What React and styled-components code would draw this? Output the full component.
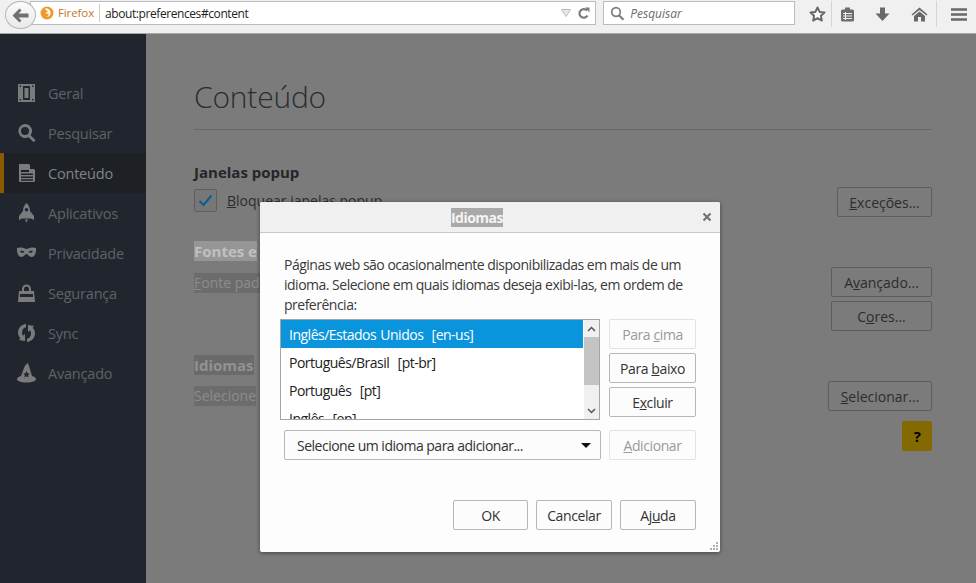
import styled, { createGlobalStyle } from 'styled-components';

const Global = createGlobalStyle`
  html, body { margin: 0; height: 100%; overflow: hidden; }
  body { font-family: "Open Sans", "Noto Sans", sans-serif; font-size: 14px; letter-spacing: -0.5px; }
  * { box-sizing: border-box; }
`;

const Window = styled.div`
  width: 976px;
  height: 583px;
  display: flex;
  flex-direction: column;
  position: relative;
  overflow: hidden;
`;

/* toolbar */
const Toolbar = styled.div`
  height: 34px;
  flex: none;
  display: flex;
  align-items: flex-start;
  background: #f0f0f0;
  border-bottom: 1px solid #a8a8a8;
  padding: 1px 0 0 5px;
  position: relative;
`;
const BackButton = styled.div`
  width: 31px;
  height: 28px;
  border-radius: 50%;
  background: linear-gradient(#fbfbfb, #e9e9e9);
  border: 1px solid #b5b5b5;
  display: flex;
  align-items: center;
  justify-content: center;
  z-index: 1;
`;
const UrlBar = styled.div`
  width: 567px;
  height: 24px;
  margin-left: -6px;
  background: #fff;
  border: 1px solid #b9bcc0;
  display: flex;
  align-items: center;
  padding-left: 9px;
`;
const Identity = styled.span`
  color: #c8742a;
  font-size: 11.5px;
  margin-left: 4px;
  padding-right: 5px;
  border-right: 1px solid #d9c9b5;
  line-height: 18px;
  letter-spacing: -0.1px;
`;
const UrlText = styled.span`
  color: #222;
  font-size: 12px;
  margin-left: 5px;
  flex: 1;
  letter-spacing: -0.42px;
`;
const UrlIcons = styled.div`
  display: flex;
  align-items: center;
  gap: 7px;
  padding-right: 5px;
`;
const SearchBar = styled.div`
  width: 192px;
  height: 24px;
  margin-left: 7px;
  background: #fff;
  border: 1px solid #b9bcc0;
  display: flex;
  align-items: center;
  gap: 5px;
  padding-left: 6px;
  font-style: italic;
  font-size: 12px;
  color: #6a6a6a;
  letter-spacing: 0;
`;
const ToolIcons = styled.div`
  display: flex;
  align-items: center;
  height: 26px;
  margin-left: 8px;
`;
const ToolSlot = styled.div`
  width: ${p => p.$w}px;
  display: flex;
  justify-content: center;
  align-items: center;
  height: 26px;
  padding-left: ${p => p.$pad || 0}px;
  border-right: ${p => (p.$sep ? '1px solid #d6d6d6' : 'none')};
`;

/* page */
const Page = styled.div`
  flex: 1;
  display: flex;
  min-height: 0;
`;
const Sidebar = styled.nav`
  width: 146px;
  flex: none;
  background: #21262e;
  padding-top: 39px;
`;
const NavItem = styled.div`
  height: 40px;
  display: flex;
  align-items: center;
  gap: 12px;
  padding-left: ${p => (p.$active ? 13 : 17)}px;
  font-size: 14.5px;
  letter-spacing: -0.2px;
  color: ${p => (p.$active ? '#808489' : '#5e6266')};
  background: ${p => (p.$active ? '#1d2126' : 'transparent')};
  border-left: ${p => (p.$active ? '4px solid #8a5a00' : 'none')};
`;
const NavIcon = styled.svg`
  width: 19px;
  height: 20px;
  flex: none;
  fill: #797b7d;
`;
const Content = styled.main`
  flex: 1;
  background: #7b7b7b;
  padding: 42px 44px 0 48px;
  color: #26282b;
`;
const Heading = styled.h1`
  margin: 0;
  font-weight: 300;
  font-size: 30px;
  line-height: 42px;
  letter-spacing: -0.2px;
  color: #2b2d30;
  padding-bottom: 11px;
  border-bottom: 1px solid #676767;
`;
const SectionTitle = styled.h2`
  margin: ${p => p.$top}px 0 0;
  font-size: 15px;
  font-weight: 700;
  line-height: 18px;
  letter-spacing: 0;
  height: 20px;
  color: #24262a;
`;
const Row = styled.div`
  display: flex;
  align-items: flex-start;
  justify-content: space-between;
  margin-top: ${p => p.$top}px;
`;
const RowLabel = styled.div`
  display: flex;
  align-items: center;
  gap: 10px;
  line-height: 20px;
  letter-spacing: 0;
  color: #2b2d30;
  padding-top: ${p => p.$top || 0}px;
`;
const Check = styled.span`
  width: 23px;
  height: 23px;
  border: 1px solid #5f5f5f;
  border-radius: 2px;
  background: #777;
  display: flex;
  align-items: center;
  justify-content: center;
`;
const Sel = styled.span`
  background: ${p => p.$bg};
  color: ${p => p.$fg};
`;
const ButtonStack = styled.div`
  display: flex;
  flex-direction: column;
  gap: 4px;
`;
const GhostButton = styled.div`
  height: 30px;
  width: ${p => p.$w}px;
  border: 1px solid #5d5d5d;
  border-radius: 2px;
  background: #7b7b7b;
  display: flex;
  align-items: center;
  justify-content: center;
  color: #2b2d30;
  letter-spacing: 0;
`;
const HelpButton = styled.div`
  width: 30px;
  height: 30px;
  margin: 10px 0 0 auto;
  background: #846800;
  border-radius: 2px;
  display: flex;
  align-items: center;
  justify-content: center;
  font-weight: 700;
  font-size: 15px;
  color: #000;
`;

/* dialog */
const Dialog = styled.section`
  position: absolute;
  left: 260px;
  top: 202px;
  width: 460px;
  height: 350px;
  background: #fdfdfd;
  border-radius: 2px;
  box-shadow: 0 1px 4px rgba(0, 0, 0, 0.45);
  display: flex;
  flex-direction: column;
`;
const TitleBar = styled.header`
  height: 31px;
  flex: none;
  background: #f0f0f0;
  border-bottom: 1px solid #c9c9c9;
  border-radius: 2px 2px 0 0;
  display: flex;
  align-items: center;
  justify-content: center;
  padding-right: 26px;
  position: relative;
  font-weight: 700;
  font-size: 14px;
`;
const CloseX = styled.span`
  position: absolute;
  right: 5px;
  top: 7px;
  display: flex;
`;
const DialogBody = styled.div`
  flex: 1;
  padding: 22px 24px 0 20px;
  display: flex;
  flex-direction: column;
  color: #3a3a3a;
`;
const Intro = styled.p`
  margin: 0 0 4px 4px;
  line-height: 20px;
  font-size: 14px;
`;
const ListRow = styled.div`
  display: flex;
  justify-content: space-between;
  align-items: flex-start;
`;
const ListBox = styled.div`
  width: 320px;
  height: 101px;
  border: 1px solid #a5a5a5;
  background: #fff;
  display: flex;
  overflow: hidden;
`;
const Options = styled.div`
  flex: 1;
  overflow: hidden;
`;
const Option = styled.div`
  height: 28px;
  line-height: 30px;
  padding-left: 8px;
  white-space: pre;
  word-spacing: 1px;
  background: ${p => (p.$on ? '#0a94dc' : 'transparent')};
  color: ${p => (p.$on ? '#fff' : '#222')};
`;
const Scroll = styled.div`
  width: 16px;
  flex: none;
  background: #f0f0f0;
  border-left: 1px solid #fff;
  display: flex;
  flex-direction: column;
  align-items: center;
`;
const ScrollArrow = styled.div`
  height: 17px;
  display: flex;
  align-items: center;
  justify-content: center;
`;
const ScrollThumb = styled.div`
  width: 15px;
  height: 48px;
  background: #c4c4c4;
`;
const ScrollTrack = styled.div`
  flex: 1;
`;
const SideButtons = styled.div`
  display: flex;
  flex-direction: column;
  gap: 4px;
`;
const DlgButton = styled.div`
  width: ${p => p.$w}px;
  height: 30px;
  border: 1px solid ${p => (p.$off ? '#e2e2e2' : '#b7b7b7')};
  border-radius: 2px;
  background: #fcfcfc;
  color: ${p => (p.$off ? '#9a9a9a' : '#333')};
  display: flex;
  align-items: center;
  justify-content: center;
  letter-spacing: -0.4px;
`;
const AddRow = styled.div`
  display: flex;
  justify-content: space-between;
  margin: 10px 0 0 4px;
`;
const Select = styled.div`
  width: 317px;
  height: 30px;
  border: 1px solid #b7b7b7;
  border-radius: 2px;
  background: #fcfcfc;
  display: flex;
  align-items: center;
  justify-content: space-between;
  padding: 0 9px 0 12px;
  color: #333;
`;
const Caret = styled.span`
  width: 0;
  height: 0;
  border-left: 5px solid transparent;
  border-right: 5px solid transparent;
  border-top: 5px solid #111;
`;
const Footer = styled.div`
  display: flex;
  justify-content: flex-end;
  gap: 8px;
  margin-top: 40px;
`;
const Grip = styled.svg`
  position: absolute;
  right: 1px;
  bottom: 1px;
  width: 10px;
  height: 10px;
  fill: #aab0b5;
`;

const navItems = [
  { label: 'Geral', icon: <path fillRule="evenodd" d="M1 1h17v18H1zM2.600 2.600v1.500h1.500V2.600zM15 2.600v1.500h1.500V2.600zM2.600 16v1.500h1.500V16zM15 16v1.500h1.500V16zM6 3v14h7V3zM7.500 5h4v10h-4z" /> },
  { label: 'Pesquisar', icon: <path d="M8 1a7 7 0 0 1 5.600 11.200l5 5-2 2-5-5A7 7 0 1 1 8 1zm0 3a4 4 0 1 0 0 8 4 4 0 0 0 0-8z" /> },
  { label: 'Conteúdo', active: true, icon: <path fillRule="evenodd" d="M2 1h10l6 6v11a1 1 0 0 1-1 1H3a1 1 0 0 1-1-1zM13 2v4h4zM4 7v2h8V7zM4 10.500v1.500h12v-1.500zM4 13.500V15h12v-1.500zM4 16.300v1.400h12v-1.400z" /> },
  { label: 'Aplicativos', icon: <path d="M9.500 0c2.500 2 3.500 5 3.500 8l4 5v4l-3-1.500H5L2 17v-4l4-5c0-3 1-6 3.500-8zM9.500 5a1.800 1.800 0 1 0 0 3.600 1.800 1.800 0 0 0 0-3.600zM8 16.500h3L9.500 19.500z" /> },
  { label: 'Privacidade', icon: <path fillRule="evenodd" d="M0 5c3-1 6-.5 9.500 1C13 4.500 16 4 19 5c.5 4-1 9-4.500 9-2.500 0-3.500-3-5-3s-2.500 3-5 3C1 14-.5 9 0 5zM3 8c1 2 3 2.500 4.500 1C6 7.500 4.500 7.500 3 8zm13 0c-1.500-.5-3-.5-4.500 1 1.500 1.500 3.500 1 4.500-1z" /> },
  { label: 'Segurança', icon: <path fillRule="evenodd" d="M5 8V6a4.500 4.500 0 0 1 9 0v2h3l1 11H1L2 8zM7 8h5V6a2.500 2.500 0 0 0-5 0zM3 11v3h13v-3z" /> },
  { label: 'Sync', icon: <path d="M9 1v3.200C6.500 4.600 5 6.800 5 9.500c0 1.200.3 2.300.9 3.200L8 11v7l-6-1 1.300-1.800C1.800 13.600 1 11.700 1 9.500 1 5.200 4.500 1.500 9 1zm1 18v-3.200c2.500-.4 4-2.600 4-5.300 0-1.200-.3-2.300-.9-3.200L11 9V2l6 1-1.300 1.800c1.500 1.600 2.300 3.500 2.300 5.700 0 4.300-3.500 8-8 8.500z" /> },
  { label: 'Avançado', icon: <path fillRule="evenodd" d="M11 0l1 3 3 10c2 .5 4 1.500 4 3 0 2-4 3.500-9.500 3.500S0 18 0 16c0-1.500 2-2.500 4-3l3-8c1-2.500 2.500-4.500 4-5zM9.500 8l-1 2.200-2.300.3 1.700 1.600-.5 2.400 2.100-1.200 2.100 1.200-.5-2.400 1.700-1.600-2.300-.3z" /> },
];

const App = () => (
  <Window>
    <Global />
    <Toolbar>
      <BackButton>
        <svg width="17" height="15" viewBox="0 0 17 15"><path d="M7.500 0.500L9.500 2.500 6.500 5.500H16.500V9.500H6.500L9.500 12.500 7.500 14.500 0.500 7.500z" fill="#6d6f73" /></svg>
      </BackButton>
      <UrlBar>
        <svg width="14" height="14" viewBox="0 0 14 14">
          <circle cx="7" cy="7" r="6.500" fill="#ef9a2d" />
          <path d="M5 2.500a4.500 4.500 0 0 1 5.500 4.500c0 2.500-2 4-4 4 2-1 2.500-2.500 2-3.500-1 .5-2.500.5-3-1 1 .3 2 0 2.500-1-1-.5-2-1.500-3-3z" fill="#fff" />
        </svg>
        <Identity>Firefox</Identity>
        <UrlText>about:preferences#content</UrlText>
        <UrlIcons>
          <svg width="10" height="8" viewBox="0 0 10 8"><path d="M0.500 0.500h9L5 7.500z" fill="#e8e8e8" stroke="#b8bcc0" /></svg>
          <svg width="12" height="13" viewBox="0 0 12 13"><path d="M9.500 8.500A4.300 4.300 0 1 1 9 3.500" fill="none" stroke="#787c80" strokeWidth="2.200" /><path d="M7 0.500L11.500 0.500V5.500z" fill="#787c80" /></svg>
        </UrlIcons>
      </UrlBar>
      <SearchBar>
        <svg width="15" height="15" viewBox="0 0 15 15"><circle cx="6" cy="6" r="4.300" fill="none" stroke="#7b7e82" strokeWidth="1.700" /><path d="M9 9.300L13.500 13.800" stroke="#7b7e82" strokeWidth="2.200" /></svg>
        Pesquisar
      </SearchBar>
      <ToolIcons>
        <ToolSlot $w={29} $sep>
          <svg width="17" height="16" viewBox="0 0 17 16"><path d="M8.500 1.500l2.100 4.400 4.900.6-3.600 3.300.9 4.800-4.300-2.400-4.300 2.400.9-4.800L1.500 6.500l4.900-.6z" fill="#fff" stroke="#66696d" strokeWidth="2" strokeLinejoin="round" /></svg>
        </ToolSlot>
        <ToolSlot $w={30}>
          <svg width="15" height="15" viewBox="0 0 15 15"><rect x="1" y="2.500" width="13" height="12" rx="1.500" fill="#6a6d71" /><rect x="5" y="0.500" width="5" height="3" fill="#6a6d71" /><path d="M3 6.500h9M3 9h9M3 11.500h9M5.500 5v8" stroke="#f0f0f0" strokeWidth="1" /></svg>
        </ToolSlot>
        <ToolSlot $w={40}>
          <svg width="15" height="15" viewBox="0 0 15 15"><path d="M5 0.500h5v6h4.500l-7 7.500-7-7.500H5z" fill="#66696d" /></svg>
        </ToolSlot>
        <ToolSlot $w={35} $sep>
          <svg width="17" height="15" viewBox="0 0 17 15"><path d="M8.500 0.500L16.500 7.500 15.500 8.500 8.500 3 1.500 8.500 .5 7.500z" fill="#66696d" /><path d="M3 9l5.500-4.500L14 9v5.500H10V10H7v4.500H3z" fill="#66696d" /></svg>
        </ToolSlot>
        <ToolSlot $w={39} $pad={5}>
          <svg width="16" height="13" viewBox="0 0 16 13"><path d="M0 1.500h16M0 6.500h16M0 11.500h16" stroke="#66696d" strokeWidth="2.600" /></svg>
        </ToolSlot>
      </ToolIcons>
    </Toolbar>
    <Page>
      <Sidebar>
        {navItems.map(item => (
          <NavItem key={item.label} $active={item.active}>
            <NavIcon viewBox="0 0 19 20">{item.icon}</NavIcon>
            {item.label}
          </NavItem>
        ))}
      </Sidebar>
      <Content>
        <Heading>Conteúdo</Heading>
        <SectionTitle $top={33}>Janelas popup</SectionTitle>
        <Row $top={4}>
          <RowLabel $top={2}>
            <Check>
              <svg width="15" height="13" viewBox="0 0 15 13"><path d="M1.500 7L5.500 11 13.500 1.500" fill="none" stroke="#0a5c94" strokeWidth="2" /></svg>
            </Check>
            <span><u>B</u>loquear janelas popup</span>
          </RowLabel>
          <GhostButton $w={95}><span><u>E</u>xceções...</span></GhostButton>
        </Row>
        <SectionTitle $top={25}><Sel $bg="#969696" $fg="#c0c0c0">Fontes e</Sel></SectionTitle>
        <Row $top={5}>
          <RowLabel $top={6}><Sel $bg="#6c6c6c" $fg="#8c8c8c"><u>F</u>onte pad</Sel></RowLabel>
          <ButtonStack>
            <GhostButton $w={101}><span>A<u>v</u>ançado...</span></GhostButton>
            <GhostButton $w={101}><span>C<u>o</u>res...</span></GhostButton>
          </ButtonStack>
        </Row>
        <SectionTitle $top={25}><Sel $bg="#6a6a6a" $fg="#929292">Idiomas</Sel></SectionTitle>
        <Row $top={5}>
          <RowLabel $top={5}><Sel $bg="#6c6c6c" $fg="#8c8c8c">Selecione</Sel></RowLabel>
          <GhostButton $w={104}><span><u>S</u>elecionar...</span></GhostButton>
        </Row>
        <HelpButton>?</HelpButton>
      </Content>
    </Page>
    <Dialog>
      <TitleBar>
        <Sel $bg="#a9a9a9" $fg="#f4f4f4">Idiomas</Sel>
        <CloseX>
          <svg width="16" height="16" viewBox="0 0 16 16"><path d="M4.500 4.500l7 7M11.500 4.500l-7 7" stroke="#6f7275" strokeWidth="2.200" /></svg>
        </CloseX>
      </TitleBar>
      <DialogBody>
        <Intro>
          Páginas web são ocasionalmente disponibilizadas em mais de um idioma. Selecione em quais idiomas deseja exibi-las, em ordem de preferência:
        </Intro>
        <ListRow>
          <ListBox>
            <Options>
              <Option $on>Inglês/Estados Unidos  [en-us]</Option>
              <Option>Português/Brasil  [pt-br]</Option>
              <Option>Português  [pt]</Option>
              <Option>Inglês  [en]</Option>
            </Options>
            <Scroll>
              <ScrollArrow>
                <svg width="9" height="6" viewBox="0 0 9 6"><path d="M1 5l3.500-3.500L8 5" fill="none" stroke="#555" strokeWidth="1.500" /></svg>
              </ScrollArrow>
              <ScrollThumb />
              <ScrollTrack />
              <ScrollArrow>
                <svg width="9" height="6" viewBox="0 0 9 6"><path d="M1 1l3.500 3.500L8 1" fill="none" stroke="#555" strokeWidth="1.500" /></svg>
              </ScrollArrow>
            </Scroll>
          </ListBox>
          <SideButtons>
            <DlgButton $w={87} $off><span>Para <u>c</u>ima</span></DlgButton>
            <DlgButton $w={87}><span>Para <u>b</u>aixo</span></DlgButton>
            <DlgButton $w={87}><span>E<u>x</u>cluir</span></DlgButton>
          </SideButtons>
        </ListRow>
        <AddRow>
          <Select>Selecione um idioma para adicionar...<Caret /></Select>
          <DlgButton $w={87} $off><span><u>A</u>dicionar</span></DlgButton>
        </AddRow>
        <Footer>
          <DlgButton $w={75}>OK</DlgButton>
          <DlgButton $w={76}>Cancelar</DlgButton>
          <DlgButton $w={76}><span>Aj<u>u</u>da</span></DlgButton>
        </Footer>
      </DialogBody>
      <Grip viewBox="0 0 10 10">
        <rect x="7" y="1" width="2" height="2" />
        <rect x="4" y="4" width="2" height="2" />
        <rect x="7" y="4" width="2" height="2" />
        <rect x="1" y="7" width="2" height="2" />
        <rect x="4" y="7" width="2" height="2" />
        <rect x="7" y="7" width="2" height="2" />
      </Grip>
    </Dialog>
  </Window>
);

export default App;
